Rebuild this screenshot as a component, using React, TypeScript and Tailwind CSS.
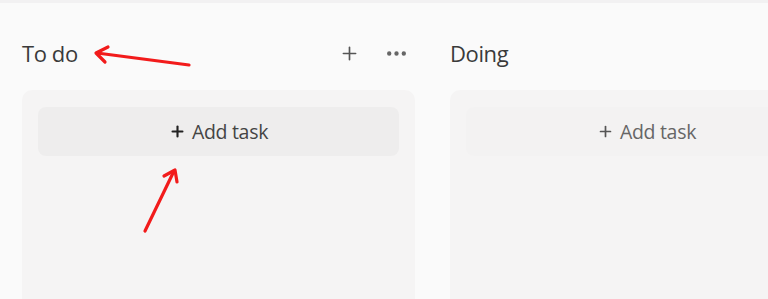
import React from 'react';
import { Plus, Ellipsis } from 'lucide-react';

interface Column {
    id: string;
    title: string;
    showActions: boolean;
    active: boolean;
}

const columns: Column[] = [
    { id: 'todo', title: 'To do', showActions: true, active: true },
    { id: 'doing', title: 'Doing', showActions: false, active: false },
];

const font = { fontFamily: '"Open Sans", "Noto Sans", sans-serif' };

const BoardColumn: React.FC<{ column: Column }> = ({ column }) => (
    <section className="flex flex-col w-[393px] shrink-0">
        <header className="flex items-center justify-between h-[44px] mt-[28px] mb-[15px] pr-[6px]">
            <h2 className="text-[22px] font-medium text-[#3a3a3a] tracking-[-0.4px]">{column.title}</h2>
            {column.showActions && (
                <div className="flex items-center gap-[24px] text-[#555]">
                    <Plus size={21} strokeWidth={1.9} />
                    <Ellipsis size={25} strokeWidth={2.2} className="text-[#666]" />
                </div>
            )}
        </header>
        <div className="flex-1 bg-[#f5f4f4] rounded-t-[10px] px-[16px] pt-[17px]">
            <button
                className={`w-full h-[49px] rounded-[8px] flex items-center justify-center gap-[6px] text-[19.5px] font-medium tracking-[-0.3px] ${column.active ? 'bg-[#eeeded] text-[#444]' : 'bg-[#f3f2f2] text-[#666]'}`}
            >
                <Plus size={17} strokeWidth={column.active ? 3 : 2.4} className={column.active ? 'text-[#222]' : 'text-[#555]'} />
                Add task
            </button>
        </div>
    </section>
);

export default function App() {
    return (
        <div className="relative w-[768px] h-[299px] overflow-hidden bg-[#fafafa] flex flex-col" style={font}>
            <div className="h-[3px] bg-[#f2f1f2] shrink-0" />
            <div className="flex-1 flex gap-[35px] pl-[22px]">
                {columns.map((c) => (
                    <BoardColumn key={c.id} column={c} />
                ))}
            </div>

            {/* annotation arrows */}
            <svg className="absolute inset-0 pointer-events-none" width="768" height="299" viewBox="0 0 768 299">
                <g stroke="#f21b1b" strokeWidth="3.2" strokeLinecap="round" strokeLinejoin="round" fill="none">
                    <path d="M189 65 L97 53" />
                    <path d="M108 47 L96 53 L105 62" />
                    <path d="M145 231 L174 171" />
                    <path d="M164 176 L175 170 L177 182" />
                </g>
            </svg>
        </div>
    );
}
